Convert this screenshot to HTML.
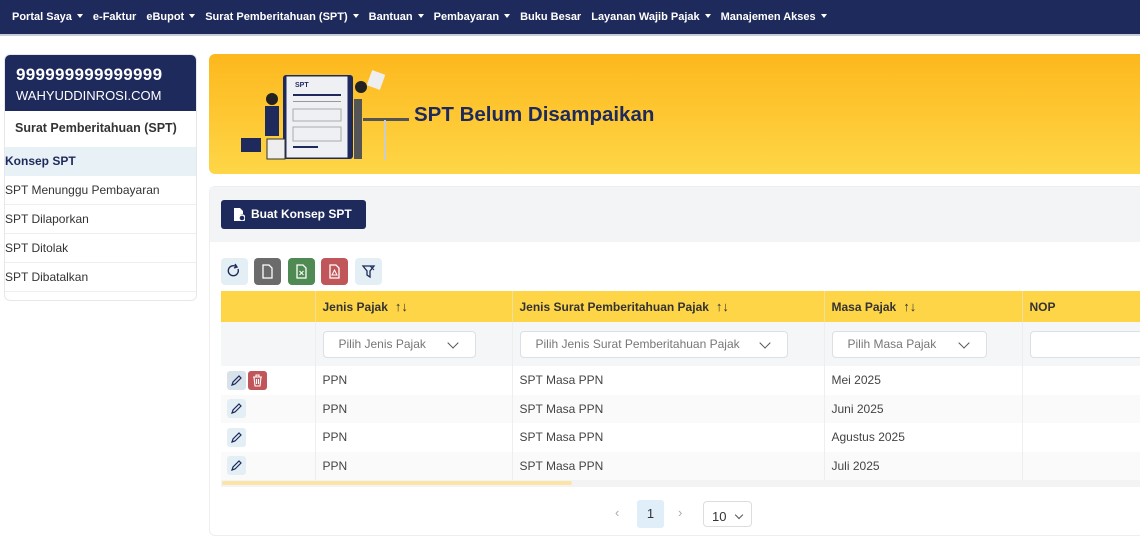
<!DOCTYPE html>
<html><head><meta charset="utf-8"><style>
*{box-sizing:border-box;margin:0;padding:0}
body{width:1140px;height:531px;overflow:hidden;background:#fff;font-family:"Liberation Sans",sans-serif;color:#333;position:relative;font-size:12px}
.nav{position:absolute;left:0;top:0;width:1140px;height:36px;background:#1f2a5c;border-bottom:2px solid #c9ccd6;display:flex;align-items:center;padding-left:12px;gap:0}
.nav span{color:#fff;font-weight:bold;font-size:11px;margin-right:10px;white-space:nowrap}
.nav span.d::after{content:"";display:inline-block;margin-left:5px;border-left:3px solid transparent;border-right:3px solid transparent;border-top:4px solid #fff;vertical-align:2px}
.side{position:absolute;left:4px;top:54px;width:193px;height:247px;border:1px solid #e5e7eb;border-radius:6px;overflow:hidden}
.sh{background:#1f2a5c;color:#fff;height:56px;padding:10px 0 0 11px}
.sh b{font-size:17px;display:block;letter-spacing:.3px}
.sh i{font-style:normal;font-size:13px;display:block;margin-top:3px}
.st{height:36px;padding:10px 0 0 10px;font-weight:bold;font-size:12.5px;color:#333}
.si{height:29px;line-height:29px;font-size:12px;border-bottom:1px solid #eee;padding-left:0}
.si.a{background:#e8f1f5;color:#1f2a5c;font-weight:bold;border:none}
.ban{position:absolute;left:209px;top:54px;width:940px;height:120px;border-radius:6px;background:linear-gradient(180deg,#fdb81d,#fed647)}
.ban h1{position:absolute;left:205px;top:49px;font-size:20.5px;color:#1f2a5c}
.card{position:absolute;left:209px;top:186px;width:940px;height:350px;border:1px solid #eee;border-radius:6px}
.ct{height:55px;background:#f3f4f5;position:relative}
.btn{position:absolute;left:11px;top:13px;width:145px;height:29px;background:#1f2a5c;border-radius:3px;color:#fff;font-weight:bold;font-size:12px;line-height:29px;padding-left:30px}
.tb{position:absolute;top:258px;width:27px;height:27px;border-radius:4px}
table{position:absolute;left:221px;top:291px;border-collapse:collapse;width:940px;table-layout:fixed}
td,th{text-align:left;font-size:12px;padding:0 7px;border-right:1px solid #eee}
th{background:#fed547;height:31px;font-size:12px;color:#333;border-right:1px solid #f0e0a0}
tr.f td{background:#f5f6f8;height:44px}
.sel{border:1px solid #dcdfe3;background:#fff;border-radius:4px;height:27px;line-height:25px;padding-left:15px;color:#777;position:relative}
.sel::after{content:"";position:absolute;right:18px;top:7px;width:7px;height:7px;border-right:1.5px solid #555;border-bottom:1.5px solid #555;transform:rotate(45deg)}
tr.r td{height:28.5px;color:#444}
tr.r:nth-child(even) td{background:#fafafa}
.ic{display:inline-block;width:19px;height:19px;border-radius:3px;background:#e4eff5;vertical-align:middle;position:relative;margin-left:-1px}
.ic svg{position:absolute;left:0;top:0}
.ar{font-weight:normal;margin-left:7px;font-size:13px}
</style></head><body>
<div class="nav"><span class="d">Portal Saya</span><span>e-Faktur</span><span class="d">eBupot</span><span class="d">Surat Pemberitahuan (SPT)</span><span class="d">Bantuan</span><span class="d">Pembayaran</span><span>Buku Besar</span><span class="d">Layanan Wajib Pajak</span><span class="d">Manajemen Akses</span></div>
<div class="side"><div class="sh"><b>999999999999999</b><i>WAHYUDDINROSI.COM</i></div>
<div class="st">Surat Pemberitahuan (SPT)</div>
<div class="si a">Konsep SPT</div><div class="si">SPT Menunggu Pembayaran</div><div class="si">SPT Dilaporkan</div><div class="si">SPT Ditolak</div><div class="si">SPT Dibatalkan</div></div>
<div class="ban">
<svg width="200" height="120" style="position:absolute;left:20px;top:0">
<rect x="54" y="21" width="70" height="84" rx="3" fill="#1f2a5c"/>
<rect x="57" y="22" width="62" height="82" fill="#eef0f4" stroke="#1f2a5c"/>
<text x="66" y="33" font-size="7" font-weight="bold" fill="#1f2a5c" font-family="Liberation Sans">SPT</text>
<rect x="64" y="40" width="48" height="2" fill="#1f2a5c"/><rect x="64" y="47" width="48" height="1" fill="#999"/>
<rect x="64" y="55" width="48" height="12" fill="none" stroke="#aaa"/><rect x="64" y="73" width="48" height="14" fill="none" stroke="#aaa"/>
<rect x="64" y="92" width="25" height="2" fill="#1f2a5c"/>
<rect x="125" y="45" width="8" height="60" fill="#555"/><circle cx="132" cy="33" r="6" fill="#222"/>
<rect x="134" y="64" width="46" height="3" fill="#555"/><rect x="155" y="66" width="2" height="40" fill="#ccc"/>
<rect x="12" y="84" width="20" height="14" fill="#1f2a5c"/><circle cx="43" cy="45" r="6" fill="#222"/>
<rect x="36" y="52" width="14" height="30" fill="#1f2a5c"/><rect x="38" y="85" width="18" height="20" fill="#eee" stroke="#333"/>
<rect x="140" y="18" width="14" height="16" fill="#eee" transform="rotate(20 147 26)"/>
</svg>
<h1>SPT Belum Disampaikan</h1></div>
<div class="card"><div class="ct"><div class="btn"><svg width="12" height="13" style="position:absolute;left:12px;top:8px"><path d="M1 0h6l3 3v3a4 4 0 0 0-3 7H1z" fill="#fff"/><circle cx="9" cy="10" r="3" fill="none" stroke="#fff" stroke-width="1.4"/></svg>Buat Konsep SPT</div></div></div>
<div class="tb" style="left:221px;background:#e4eff5"><svg width="27" height="27"><path d="M17 11a5 5 0 1 1-2-2.5" fill="none" stroke="#1f2a5c" stroke-width="1.4"/><path d="M14 6l2 3-3 1" fill="none" stroke="#1f2a5c" stroke-width="1.4"/></svg></div>
<div class="tb" style="left:254px;background:#6b6b6b"><svg width="27" height="27"><path d="M9 7h6l3 3v10H9z" fill="none" stroke="#fff" stroke-width="1.3"/></svg></div>
<div class="tb" style="left:288px;background:#4f8a52"><svg width="27" height="27"><path d="M9 7h6l3 3v10H9z" fill="none" stroke="#fff" stroke-width="1.3"/><path d="M11.5 13l4 4m0-4l-4 4" stroke="#fff"/></svg></div>
<div class="tb" style="left:321px;background:#c0565a"><svg width="27" height="27"><path d="M9 7h6l3 3v10H9z" fill="none" stroke="#fff" stroke-width="1.3"/><path d="M11 17l2.5-5 2.5 5z" fill="none" stroke="#fff"/></svg></div>
<div class="tb" style="left:355px;background:#e4eff5"><svg width="27" height="27"><path d="M8 8h11l-4 5v6l-3-2v-4z" fill="none" stroke="#1f2a5c" stroke-width="1.3"/><path d="M15 8l4 4" stroke="#1f2a5c"/></svg></div>
<table>
<colgroup><col style="width:94px"><col style="width:197px"><col style="width:312px"><col style="width:198px"><col></colgroup>
<tr><th></th><th>Jenis Pajak<span class="ar">↑↓</span></th><th>Jenis Surat Pemberitahuan Pajak<span class="ar">↑↓</span></th><th>Masa Pajak<span class="ar">↑↓</span></th><th>NOP</th></tr>
<tr class="f"><td></td><td><div class="sel" style="width:153px">Pilih Jenis Pajak</div></td><td><div class="sel" style="width:268px">Pilih Jenis Surat Pemberitahuan Pajak</div></td><td><div class="sel" style="width:155px">Pilih Masa Pajak</div></td><td><div class="sel" style="width:200px;border-right:none"></div></td></tr>
<tr class="r"><td><span class="ic" style="background:#d7e2ea"><svg width="19" height="19"><path d="M5 14l1-3 6-6 2 2-6 6z" fill="none" stroke="#1f2a5c" stroke-width="1.2"/></svg></span> <span class="ic" style="background:#c0565a"><svg width="19" height="19"><path d="M5 6h9M8 6V4h3v2M6 6l1 9h5l1-9M8.5 8v5M10.5 8v5" fill="none" stroke="#fff" stroke-width="1.1"/></svg></span></td><td>PPN</td><td>SPT Masa PPN</td><td>Mei 2025</td><td></td></tr>
<tr class="r"><td><span class="ic"><svg width="19" height="19"><path d="M5 14l1-3 6-6 2 2-6 6z" fill="none" stroke="#1f2a5c" stroke-width="1.2"/></svg></span></td><td>PPN</td><td>SPT Masa PPN</td><td>Juni 2025</td><td></td></tr>
<tr class="r"><td><span class="ic"><svg width="19" height="19"><path d="M5 14l1-3 6-6 2 2-6 6z" fill="none" stroke="#1f2a5c" stroke-width="1.2"/></svg></span></td><td>PPN</td><td>SPT Masa PPN</td><td>Agustus 2025</td><td></td></tr>
<tr class="r"><td><span class="ic"><svg width="19" height="19"><path d="M5 14l1-3 6-6 2 2-6 6z" fill="none" stroke="#1f2a5c" stroke-width="1.2"/></svg></span></td><td>PPN</td><td>SPT Masa PPN</td><td>Juli 2025</td><td></td></tr>
</table>
<div style="position:absolute;left:221px;top:480px;width:919px;height:7px;background:#f3f3f3"></div>
<div style="position:absolute;left:222px;top:481px;width:350px;height:4px;background:#fbe5a6;border-radius:2px"></div>
<div style="position:absolute;left:615px;top:505px;color:#aaa;font-size:13px">‹</div>
<div style="position:absolute;left:637px;top:500px;width:27px;height:28px;background:#dfeef8;border-radius:3px;text-align:center;line-height:28px;font-size:13px">1</div>
<div style="position:absolute;left:678px;top:505px;color:#aaa;font-size:13px">›</div>
<div style="position:absolute;left:703px;top:501px;width:49px;height:26px;border:1px solid #ddd;border-radius:4px;padding:7px 0 0 8px;font-size:13px">10 <span style="display:inline-block;width:6px;height:6px;border-right:1.3px solid #555;border-bottom:1.3px solid #555;transform:rotate(45deg);margin-left:6px;vertical-align:3px"></span></div>
</body></html>
